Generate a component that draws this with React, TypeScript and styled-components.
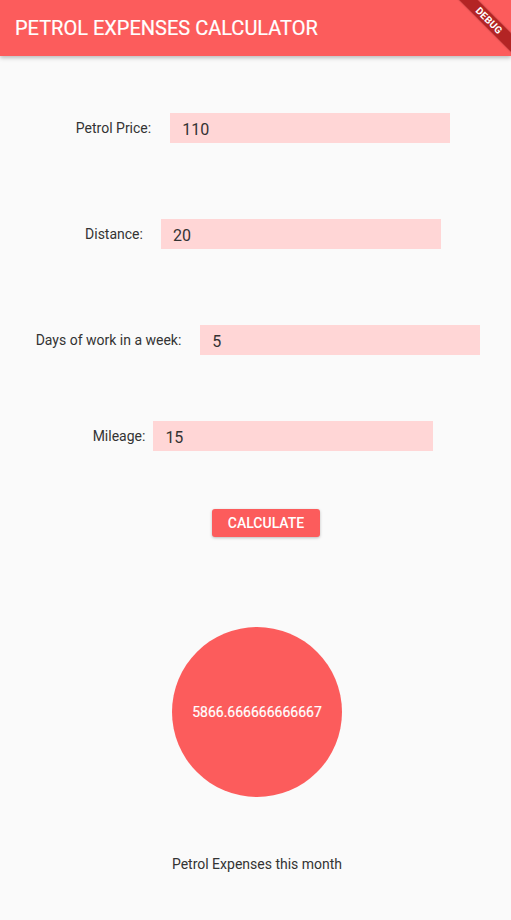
import React from "react";
import styled, { createGlobalStyle } from "styled-components";

const GlobalStyle = createGlobalStyle`
  html, body {
    margin: 0;
    padding: 0;
    background: #fafafa;
    font-family: Roboto, "Noto Sans", sans-serif;
  }
  * { box-sizing: border-box; }
`;

const Page = styled.div`
  position: relative;
  width: 511px;
  min-height: 920px;
  background: #fafafa;
  overflow: hidden;
`;

const AppBar = styled.header`
  height: 56px;
  background: #fc5c5c;
  display: flex;
  align-items: center;
  padding-left: 15px;
  box-shadow: 0 2px 4px rgba(0, 0, 0, 0.25);
  position: relative;
  z-index: 1;
`;

const Title = styled.h1`
  margin: 0;
  color: #fff;
  font-size: 20px;
  font-weight: 400;
  letter-spacing: 0;
  -webkit-text-stroke: 0.2px #fff;
`;

const DebugRibbon = styled.div`
  position: absolute;
  top: 14px;
  right: -30px;
  width: 104px;
  height: 13px;
  background: rgba(160, 22, 22, 0.8);
  transform: rotate(45deg);
  color: #fff;
  font-size: 10px;
  font-weight: 700;
  letter-spacing: 0.2px;
  line-height: 13px;
  text-align: center;
  z-index: 2;
  box-shadow: 0 0 2px rgba(0, 0, 0, 0.3);
`;

const Content = styled.main`
  display: flex;
  flex-direction: column;
  align-items: center;
`;

const Row = styled.div<{ $top: number; $gap: number; $offset: number }>`
  margin-top: ${(p) => p.$top}px;
  display: flex;
  align-items: center;
  justify-content: center;
  gap: ${(p) => p.$gap}px;
  padding-left: ${(p) => p.$offset}px;
  height: 30px;
`;

const Label = styled.label`
  font-size: 14px;
  color: #333;
  white-space: nowrap;
`;

const Field = styled.input`
  width: 280px;
  height: 30px;
  border: none;
  outline: none;
  background: #ffd6d6;
  padding: 2px 12px 0;
  font-family: Roboto, "Noto Sans", sans-serif;
  font-size: 16px;
  color: #333;
`;

const CalcButton = styled.button`
  margin-top: 58px;
  height: 28px;
  width: 108px;
  border: none;
  border-radius: 3px;
  background: #fc5c5c;
  color: #fff;
  font-family: Roboto, "Noto Sans", sans-serif;
  font-size: 14px;
  font-weight: 500;
  box-shadow: 0 1px 3px rgba(0, 0, 0, 0.25);
  cursor: pointer;
  margin-left: 21px;
`;

const Circle = styled.div`
  margin-top: 90px;
  margin-left: 3px;
  width: 170px;
  height: 170px;
  border-radius: 50%;
  background: #fc5c5c;
  color: #fff;
  display: flex;
  align-items: center;
  justify-content: center;
  font-size: 14px;
  font-weight: 400;
  -webkit-text-stroke: 0.2px #fff;
`;

const Caption = styled.p`
  margin: 59px 0 0 3px;
  font-size: 14px;
  color: #333;
  line-height: 16px;
`;

const fields = [
  { label: "Petrol Price:", value: "110", top: 57, gap: 19, offset: 15 },
  { label: "Distance:", value: "20", top: 76, gap: 18, offset: 15 },
  { label: "Days of work in a week:", value: "5", top: 76, gap: 19, offset: 5 },
  { label: "Mileage:", value: "15", top: 66, gap: 8, offset: 15 },
];

export default function App() {
  const [price, distance, days, mileage] = [110, 20, 5, 15];
  const result = ((distance * 2 * days * 4) / mileage) * price;
  return (
    <Page>
      <GlobalStyle />
      <AppBar>
        <Title>PETROL EXPENSES CALCULATOR</Title>
      </AppBar>
      <DebugRibbon>DEBUG</DebugRibbon>
      <Content>
        {fields.map((f) => (
          <Row key={f.label} $top={f.top} $gap={f.gap} $offset={f.offset}>
            <Label>{f.label}</Label>
            <Field defaultValue={f.value} />
          </Row>
        ))}
        <CalcButton>CALCULATE</CalcButton>
        <Circle>{result > 0 ? "5866.666666666667" : "0"}</Circle>
        <Caption>Petrol Expenses this month</Caption>
      </Content>
    </Page>
  );
}
